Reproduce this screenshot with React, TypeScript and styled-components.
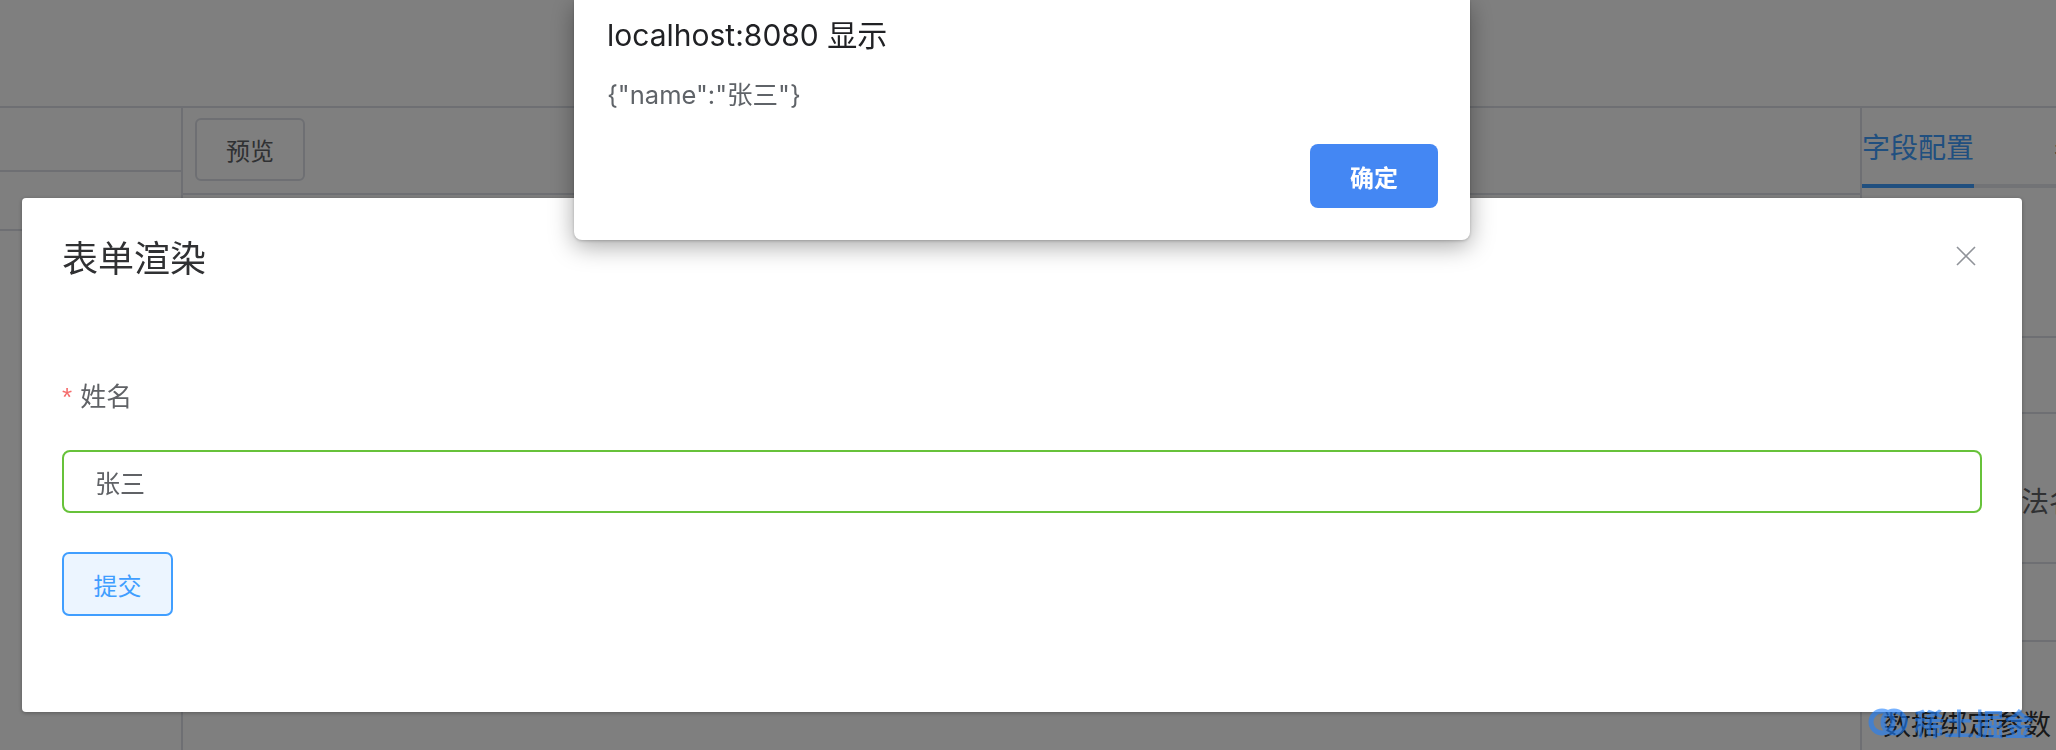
import styled, { createGlobalStyle } from 'styled-components';

const GlobalStyle = createGlobalStyle`
  html, body {
    margin: 0;
    padding: 0;
  }
  body {
    width: 2056px;
    height: 750px;
    overflow: hidden;
    background: #fff;
    font-family: 'Liberation Sans', 'Noto Sans CJK SC', sans-serif;
    color: #303133;
  }
  * {
    box-sizing: border-box;
  }
`;

const Page = styled.div`
  display: flex;
  flex-direction: column;
  height: 750px;
`;

const Header = styled.header`
  flex: none;
  height: 108px;
  border-bottom: 2px solid #dcdfe6;
`;

const Main = styled.div`
  display: flex;
  flex: 1;
  min-height: 0;
`;

const LeftPanel = styled.aside`
  flex: none;
  width: 183px;
  border-right: 2px solid #dcdfe6;
`;

const PanelRow = styled.div<{ $h: number }>`
  height: ${(p) => p.$h}px;
  border-bottom: 2px solid #dcdfe6;
`;

const Center = styled.section`
  flex: 1;
  min-width: 0;
`;

const Toolbar = styled.div`
  display: flex;
  align-items: center;
  padding: 10px 12px 12px;
  border-bottom: 2px solid #dcdfe6;
`;

const PlainButton = styled.button`
  width: 110px;
  height: 63px;
  border: 2px solid #dcdfe6;
  border-radius: 6px;
  background: #fff;
  color: #606266;
  font-family: inherit;
  font-size: 24px;
  padding: 0;
`;

const RightPanel = styled.aside`
  flex: none;
  width: 196px;
  border-left: 2px solid #dcdfe6;
  overflow: hidden;
  white-space: nowrap;
`;

const TabBar = styled.div`
  display: flex;
  height: 80px;
  border-bottom: 4px solid #e4e7ed;
`;

const Tab = styled.div<{ $active?: boolean }>`
  position: relative;
  flex: none;
  padding: 5px 40px 0;
  line-height: 71px;
  font-size: 28px;
  color: ${(p) => (p.$active ? '#409eff' : '#303133')};

  &:first-child {
    padding-left: 0;
  }

  &::after {
    content: '';
    display: ${(p) => (p.$active ? 'block' : 'none')};
    position: absolute;
    left: 0;
    right: 40px;
    bottom: -4px;
    height: 4px;
    background: #409eff;
  }
`;

const ConfigRow = styled.div<{ $h?: number; $top?: number; $left?: number }>`
  height: ${(p) => (p.$h ? `${p.$h + 2}px` : 'auto')};
  border-bottom: ${(p) => (p.$h ? '2px solid #dcdfe6' : 'none')};
  padding: ${(p) => p.$top ?? 0}px 0 0 ${(p) => p.$left ?? 0}px;
  font-size: 28px;
  line-height: 40px;
  color: #606266;
`;

const SectionTitle = styled.span`
  color: #303133;
`;

const Mask = styled.div`
  position: fixed;
  inset: 0;
  background: rgba(0, 0, 0, 0.5);
`;

const DialogWrapper = styled.div`
  position: fixed;
  inset: 0;
  padding: 198px 0 0 22px;
`;

const Dialog = styled.div`
  width: 2000px;
  background: #fff;
  border-radius: 4px;
  box-shadow: 0 1px 4px rgba(0, 0, 0, 0.3);
`;

const DialogHeader = styled.div`
  display: flex;
  justify-content: space-between;
  align-items: flex-start;
  padding: 38px 40px 20px;
`;

const DialogTitle = styled.span`
  font-size: 36px;
  line-height: 48px;
  color: #303133;
`;

const CloseButton = styled.button`
  display: flex;
  align-items: center;
  justify-content: center;
  width: 32px;
  height: 40px;
  padding: 0;
  border: 0;
  background: none;
  color: #909399;
`;

const DialogBody = styled.div`
  padding: 60px 40px 96px;
`;

const FormItem = styled.div`
  margin-bottom: 39px;
`;

const Label = styled.label`
  display: block;
  font-size: 26px;
  line-height: 66px;
  margin-bottom: 20px;
  color: #606266;

  &::before {
    content: '*';
    color: #f56c6c;
    margin-right: 8px;
  }
`;

const TextInput = styled.input`
  display: block;
  width: 100%;
  height: 63px;
  padding: 0 31px;
  border: 2px solid #67c23a;
  border-radius: 8px;
  outline: none;
  font-family: inherit;
  font-size: 25px;
  color: #606266;
  background: #fff;
`;

const PrimaryPlainButton = styled.button`
  width: 111px;
  height: 64px;
  padding: 0;
  border: 2px solid #409eff;
  border-radius: 7px;
  background: #ecf5ff;
  color: #409eff;
  font-family: inherit;
  font-size: 24px;
`;

const Alert = styled.div`
  position: fixed;
  top: 0;
  left: 574px;
  width: 896px;
  display: flex;
  flex-direction: column;
  padding: 15px 32px 32px 33px;
  background: #fff;
  border-radius: 0 0 8px 8px;
  box-shadow: 0 6px 24px rgba(0, 0, 0, 0.35), 0 1px 3px rgba(0, 0, 0, 0.2);
  font-family: Inter, 'Noto Sans CJK SC', sans-serif;
`;

const AlertTitle = styled.div`
  font-size: 30px;
  line-height: 40px;
  color: #202124;
`;

const AlertMessage = styled.div`
  margin-top: 23px;
  font-size: 25.5px;
  line-height: 34px;
  color: #5f6368;
`;

const AlertFooter = styled.div`
  display: flex;
  justify-content: flex-end;
  margin-top: 32px;
`;

const AlertButton = styled.button`
  width: 128px;
  height: 64px;
  padding: 0;
  border: 0;
  border-radius: 8px;
  background: #4487f3;
  color: #fff;
  font-family: 'Noto Sans CJK SC', sans-serif;
  font-weight: 700;
  font-size: 24px;
`;

const Watermark = styled.div`
  position: fixed;
  left: 1868px;
  top: 700px;
  display: flex;
  align-items: center;
  gap: 6px;
  opacity: 0.6;
  color: #1e80ff;
  font-size: 30px;
  font-weight: 700;
  font-family: 'Noto Sans CJK SC', sans-serif;
  pointer-events: none;
`;

const CloseIcon = () => (
  <svg width="20" height="20" viewBox="0 0 20 20">
    <path d="M1 1 L19 19 M19 1 L1 19" stroke="currentColor" strokeWidth="1.6" fill="none" />
  </svg>
);

const WatermarkLogo = () => (
  <svg width="40" height="34" viewBox="0 0 40 34">
    <circle cx="14" cy="17" r="11" stroke="#1e80ff" strokeWidth="5" fill="none" />
    <circle cx="26" cy="17" r="11" stroke="#1e80ff" strokeWidth="5" fill="none" />
  </svg>
);

const configRows = [
  { h: 148 },
  { h: 74 },
  { h: 148, top: 69, left: 75, text: '校验方法名' },
  { h: 76 },
];

export default function App() {
  return (
    <>
      <GlobalStyle />
      <Page>
        <Header />
        <Main>
          <LeftPanel>
            <PanelRow $h={64} />
            <PanelRow $h={59} />
          </LeftPanel>
          <Center>
            <Toolbar>
              <PlainButton>预览</PlainButton>
            </Toolbar>
          </Center>
          <RightPanel>
            <TabBar>
              <Tab $active>字段配置</Tab>
              <Tab>表单配置</Tab>
            </TabBar>
            {configRows.map((row, i) => (
              <ConfigRow key={i} $h={row.h} $top={row.top} $left={row.left}>
                {row.text}
              </ConfigRow>
            ))}
            <ConfigRow $top={64} $left={21}>
              <SectionTitle>数据绑定参数</SectionTitle>
            </ConfigRow>
          </RightPanel>
        </Main>
      </Page>

      <Mask />

      <DialogWrapper>
        <Dialog>
          <DialogHeader>
            <DialogTitle>表单渲染</DialogTitle>
            <CloseButton aria-label="关闭">
              <CloseIcon />
            </CloseButton>
          </DialogHeader>
          <DialogBody>
            <FormItem>
              <Label>姓名</Label>
              <TextInput defaultValue="张三" readOnly />
            </FormItem>
            <PrimaryPlainButton>提交</PrimaryPlainButton>
          </DialogBody>
        </Dialog>
      </DialogWrapper>

      <Alert>
        <AlertTitle>localhost:8080 显示</AlertTitle>
        <AlertMessage>{'{"name":"张三"}'}</AlertMessage>
        <AlertFooter>
          <AlertButton>确定</AlertButton>
        </AlertFooter>
      </Alert>

      <Watermark>
        <WatermarkLogo />
        <span>稀土掘金</span>
      </Watermark>
    </>
  );
}
